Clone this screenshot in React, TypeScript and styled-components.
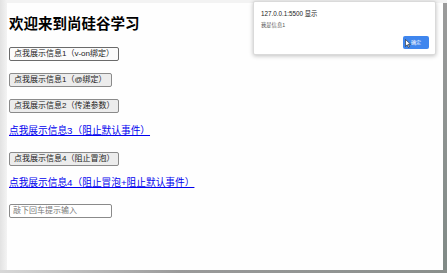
import React from 'react';
import styled, { createGlobalStyle } from 'styled-components';

const GlobalStyle = createGlobalStyle`
  html, body {
    margin: 0;
    padding: 0;
    background: #ffffff;
  }
  * {
    box-sizing: border-box;
  }
`;

const cjk = `"Liberation Sans", "Noto Sans CJK SC", sans-serif`;

const Screen = styled.div`
  position: relative;
  width: 447px;
  height: 273px;
  display: flex;
  flex-direction: column;
  overflow: hidden;
  font-family: ${cjk};
`;

const Body = styled.div`
  flex: 1;
  display: flex;
  padding: 3px 0 0 7px;
  background: linear-gradient(to right, #e2e2e2 0, #f3f3f3 7px);
`;

const Page = styled.main`
  flex: 1;
  background: #fefefe;
  padding: 0 2px;
`;

const RightEdge = styled.div`
  width: 4px;
  background: linear-gradient(to bottom, #9b9b9b, #808a86);
`;

const BottomEdge = styled.div`
  height: 3px;
  background: linear-gradient(to right, #d8d8d8, #9a9a9a 40%, #8a8f8c);
`;

const Heading = styled.h2`
  margin: 13px 0 14px;
  font-size: 14.5px;
  line-height: 17px;
  font-weight: 700;
  color: #000;
`;

const Stack = styled.div`
  display: grid;
  grid-auto-rows: 26.2px;
  justify-items: start;
  align-items: start;
`;

const Button = styled.button<{ $focused?: boolean }>`
  display: flex;
  align-items: center;
  height: 14px;
  padding: 0 4px;
  font-family: ${cjk};
  font-size: 8px;
  line-height: 10px;
  color: #222;
  background: ${p => (p.$focused ? '#fbfbfb' : '#ececec')};
  border: 1px solid ${p => (p.$focused ? '#6a6a6a' : '#8a8a8a')};
  border-radius: 2px;
`;

const Link = styled.a`
  font-size: 9.7px;
  line-height: 12px;
  margin-top: -0.5px;
  color: #0000ee;
  text-decoration: underline;
  cursor: pointer;
`;

const Input = styled.input`
  display: block;
  width: 103px;
  height: 13.5px;
  padding: 0 3px;
  font-family: ${cjk};
  font-size: 8px;
  border: 1px solid #8a8a8a;
  border-radius: 2px;
  background: #fff;
  &::placeholder {
    color: #777;
  }
`;

const Dialog = styled.div`
  position: absolute;
  left: 253px;
  top: 1px;
  width: 183px;
  height: 54px;
  background: #fff;
  border: 1px solid #dadada;
  border-radius: 2px;
  box-shadow: 0 1px 4px rgba(0, 0, 0, 0.25);
  padding: 8px 6px 5px 7px;
  display: flex;
  flex-direction: column;
`;

const DialogTitle = styled.div`
  font-size: 6.3px;
  line-height: 8px;
  color: #222;
`;

const DialogMessage = styled.div`
  margin-top: 4px;
  font-size: 5.3px;
  line-height: 7px;
  color: #555;
`;

const DialogActions = styled.div`
  margin-top: auto;
  display: flex;
  justify-content: flex-end;
`;

const OkButton = styled.button`
  position: relative;
  width: 26px;
  height: 13px;
  padding: 0;
  border: none;
  border-radius: 2px;
  background: #3f86ee;
  color: #fff;
  font-family: ${cjk};
  font-size: 5px;
  line-height: 13px;
`;

const Cursor = styled.svg`
  position: absolute;
  left: 2px;
  top: 3px;
  width: 6px;
  height: 9px;
`;

export default function App() {
  return (
    <>
      <GlobalStyle />
      <Screen>
        <Body>
          <Page>
            <Heading>欢迎来到尚硅谷学习</Heading>
            <Stack>
              <Button $focused>点我展示信息1（v-on绑定）</Button>
              <Button>点我展示信息1（@绑定）</Button>
              <Button>点我展示信息2（传递参数）</Button>
              <Link>点我展示信息3（阻止默认事件）</Link>
              <Button>点我展示信息4（阻止冒泡）</Button>
              <Link>点我展示信息4（阻止冒泡+阻止默认事件）</Link>
              <Input placeholder="敲下回车提示输入" />
            </Stack>
          </Page>
          <RightEdge />
        </Body>
        <BottomEdge />
        <Dialog>
          <DialogTitle>127.0.0.1:5500 显示</DialogTitle>
          <DialogMessage>我是信息1</DialogMessage>
          <DialogActions>
            <OkButton>
              确定
              <Cursor viewBox="0 0 12 18">
                <path d="M1 1 L1 15 L4.5 11.5 L7 17 L9 16 L6.5 10.5 L11 10.5 Z" fill="#fff" stroke="#222" strokeWidth="1.2" strokeLinejoin="round" />
              </Cursor>
            </OkButton>
          </DialogActions>
        </Dialog>
      </Screen>
    </>
  );
}
